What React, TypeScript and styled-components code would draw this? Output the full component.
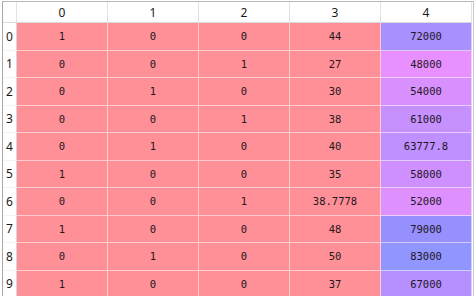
import { Fragment } from "react";
import styled, { createGlobalStyle } from "styled-components";

const GlobalStyle = createGlobalStyle`
  html, body {
    margin: 0;
    padding: 0;
    background: #ffffff;
    overflow: hidden;
  }
`;

const Frame = styled.div`
  margin: 1px 0 0 2px;
  width: 470px;
  border-left: 1px solid #a8a8a8;
  border-top: 1px solid #b8b8b8;
  border-right: 1px solid #c8c8c8;
  display: grid;
  grid-template-columns: 14px repeat(5, 91px);
  grid-template-rows: 21px;
  grid-auto-rows: 27.5px;
  background: #ffffff;
`;

const HeaderCell = styled.div`
  display: flex;
  align-items: center;
  justify-content: center;
  font-family: "Noto Sans", "DejaVu Sans", sans-serif;
  font-size: 12px;
  color: #1a1a1a;
  background: #ffffff;
  border-right: 1px solid #e2e2e2;
  border-bottom: 1px solid #dadada;
`;

const IndexCell = styled.div`
  display: flex;
  align-items: center;
  justify-content: center;
  font-family: "Noto Sans", "DejaVu Sans", sans-serif;
  font-size: 12px;
  color: #1a1a1a;
  background: #ffffff;
  border-right: 1px solid #d6d6d6;
  border-bottom: 1px solid #f4f4f4;
`;

const Cell = styled.div<{ $bg: string }>`
  display: flex;
  align-items: center;
  justify-content: center;
  font-family: "DejaVu Sans Mono", "Liberation Mono", monospace;
  font-size: 10.5px;
  color: #24161e;
  background: ${(p) => p.$bg};
  border-right: 1px solid rgba(255, 255, 255, 0.55);
  border-bottom: 1px solid rgba(255, 255, 255, 0.55);
`;

const rows: string[][] = [
  ["1", "0", "0", "44", "72000"],
  ["0", "0", "1", "27", "48000"],
  ["0", "1", "0", "30", "54000"],
  ["0", "0", "1", "38", "61000"],
  ["0", "1", "0", "40", "63777.8"],
  ["1", "0", "0", "35", "58000"],
  ["0", "0", "1", "38.7778", "52000"],
  ["1", "0", "0", "48", "79000"],
  ["0", "1", "0", "50", "83000"],
  ["1", "0", "0", "37", "67000"],
];

const VMIN = 0;
const VMAX = 83000;

// same scale as the array editor: hue from blue (max) to red (min), alpha over white
function cellColor(value: number) {
  const hue = 0.66 + (0.33 * (VMAX - value)) / (VMAX - VMIN);
  const s = 0.7;
  const v = 1;
  const alpha = 0.62;
  const h = (hue % 1) * 6;
  const i = Math.floor(h);
  const f = h - i;
  const p = v * (1 - s);
  const q = v * (1 - s * f);
  const t = v * (1 - s * (1 - f));
  const table = [
    [v, t, p],
    [q, v, p],
    [p, v, t],
    [p, q, v],
    [t, p, v],
    [v, p, q],
  ];
  const [r, g, b] = table[i % 6];
  const mix = (c: number) => Math.round(255 * (1 - alpha) + 255 * c * alpha);
  return `rgb(${mix(r)}, ${mix(g)}, ${mix(b)})`;
}

export default function App() {
  return (
    <>
      <GlobalStyle />
      <Frame>
        <HeaderCell />
        {[0, 1, 2, 3, 4].map((c) => (
          <HeaderCell key={c}>{c}</HeaderCell>
        ))}
        {rows.map((row, r) => (
          <Fragment key={r}>
            <IndexCell>{r}</IndexCell>
            {row.map((val, c) => (
              <Cell key={c} $bg={cellColor(parseFloat(val))}>
                {val}
              </Cell>
            ))}
          </Fragment>
        ))}
      </Frame>
    </>
  );
}
